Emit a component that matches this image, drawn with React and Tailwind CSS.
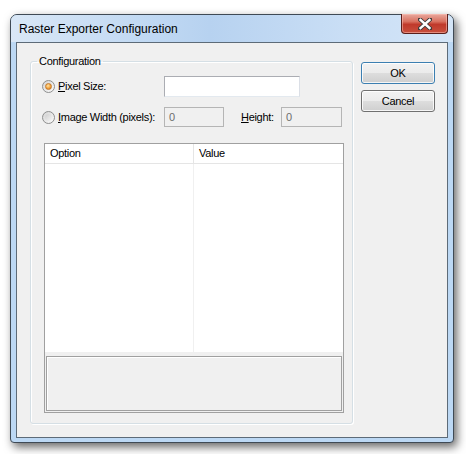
import React from "react";

function Radio({ checked }) {
  return (
    <span className="w-[13px] h-[13px] rounded-full border border-[#8e8f8f] bg-[linear-gradient(135deg,#d4d4d4,#fbfbfb)] flex items-center justify-center flex-shrink-0">
      {checked ? (
        <span className="w-[7px] h-[7px] rounded-full bg-[radial-gradient(circle_at_40%_35%,#fde3a8,#f4a43a_55%,#c8631a)] border border-[#c47a2c]"></span>
      ) : (
        <span className="w-[7px] h-[7px] rounded-full bg-[linear-gradient(135deg,#cfcfcf,#f4f4f4)]"></span>
      )}
    </span>
  );
}

function WinButton({ children, focused }) {
  return (
    <button
      className={`w-[74px] h-[22px] rounded-[3px] border text-[11px] leading-none text-black flex items-center justify-center bg-[linear-gradient(#f2f2f2_0%,#ebebeb_50%,#dddddd_51%,#cfcfcf_100%)] shadow-[inset_0_0_0_1px_rgba(255,255,255,0.8)] ${
        focused ? "border-[#3c7fb1] shadow-[inset_0_0_0_1px_#a8dcf6]" : "border-[#707070]"
      }`}
    >
      {children}
    </button>
  );
}

export default function App() {
  return (
    <div
      className="w-[466px] h-[454px] bg-white pt-[14px] pl-[10px] overflow-hidden"
      style={{ fontFamily: '"Liberation Sans", Arial, sans-serif' }}
    >
      {/* Window */}
      <div className="w-[444px] h-[429px] border border-[#3f4a55] rounded-t-[7px] rounded-b-[4px] bg-[#bcd8f4] flex flex-col px-[5px] pb-[4px] shadow-[3px_4px_10px_rgba(0,0,0,0.6)]">
        {/* Title bar */}
        <div className="h-[27px] flex justify-between items-start -mx-[5px] px-[5px] rounded-t-[6px] bg-[linear-gradient(90deg,#d9e7f6_0%,#c1d9f3_30%,#b7d2f0_45%,#c9def5_75%,#d4e5f7_100%)]">
          <span className="self-center pl-[3px] pt-[1px] text-[12px] text-black">
            Raster Exporter Configuration
          </span>
          <div className="-mt-px w-[47px] h-[20px] rounded-b-[4px] border border-[#5a1e1b] border-t-0 bg-[linear-gradient(#e9a99f_0%,#d8705f_40%,#c0392b_55%,#c8503e_100%)] flex items-center justify-center shadow-[inset_0_0_0_1px_rgba(255,200,190,0.5)]">
            <svg width="14" height="12" viewBox="0 0 14 12">
              <path
                d="M2 1.5 L12 10.5 M12 1.5 L2 10.5"
                stroke="#3a3a3a"
                strokeWidth="4.2"
                strokeLinecap="square"
              />
              <path
                d="M2.5 2 L11.5 10 M11.5 2 L2.5 10"
                stroke="#ffffff"
                strokeWidth="2.4"
                strokeLinecap="square"
              />
            </svg>
          </div>
        </div>

        {/* Client area */}
        <div className="flex-1 border border-[#5d6b78] bg-[#f0f0f0] flex pl-[13px] text-[11px] tracking-[-0.3px] text-black">
          {/* Group box */}
          <fieldset className="mt-[12px] w-[323px] h-[369px] border border-[#d5dfe5] rounded-[3px] shadow-[inset_1px_1px_0_#ffffff,1px_1px_0_#ffffff] pl-[11px] pb-[10px] flex flex-col">
            <legend className="ml-[-5px] px-[2px] leading-[13px]">Configuration</legend>

            {/* Pixel size row */}
            <div className="mt-[8px] h-[21px] flex items-center">
              <div className="w-[122px] flex items-center">
                <Radio checked />
                <span className="ml-[3px]">
                  <u>P</u>ixel Size:
                </span>
              </div>
              <div className="w-[136px] h-[21px] bg-white border border-[#abadb3] border-b-[#e3e9ef] border-r-[#dbdfe6]"></div>
            </div>

            {/* Image width row */}
            <div className="mt-[10px] h-[20px] flex items-center">
              <div className="w-[122px] flex items-center">
                <Radio />
                <span className="ml-[3px]">
                  <u>I</u>mage Width (pixels):
                </span>
              </div>
              <div className="w-[60px] h-[20px] border border-[#b5b5b5] bg-[#f0f0f0] text-[#6d6d6d] pl-[4px] flex items-center">
                0
              </div>
              <span className="ml-[17px] w-[40px]">
                <u>H</u>eight:
              </span>
              <div className="w-[61px] h-[20px] border border-[#b5b5b5] bg-[#f0f0f0] text-[#6d6d6d] pl-[4px] flex items-center">
                0
              </div>
            </div>

            {/* Option list */}
            <div className="mt-[16px] ml-[2px] w-[300px] h-[270px] border border-[#a0a0a0] flex flex-col">
              <div className="h-[20px] bg-white flex border-b border-[#e5e5e5]">
                <div className="w-[149px] border-r border-[#e5e5e5] pl-[5px] flex items-center">
                  Option
                </div>
                <div className="flex-1 pl-[5px] flex items-center">Value</div>
              </div>
              <div className="flex-1 bg-white flex">
                <div className="w-[149px] border-r border-[#f0f0f0]"></div>
                <div className="flex-1"></div>
              </div>
              <div className="h-[60px] bg-[#f0f0f0] pt-[4px] px-px pb-px flex">
                <div className="flex-1 border border-[#a0a0a0] shadow-[inset_1px_1px_0_#ffffff]"></div>
              </div>
            </div>
          </fieldset>

          {/* Buttons */}
          <div className="ml-[8px] mt-[19px] flex flex-col gap-[6px]">
            <WinButton focused>OK</WinButton>
            <WinButton>Cancel</WinButton>
          </div>
        </div>
      </div>
    </div>
  );
}
